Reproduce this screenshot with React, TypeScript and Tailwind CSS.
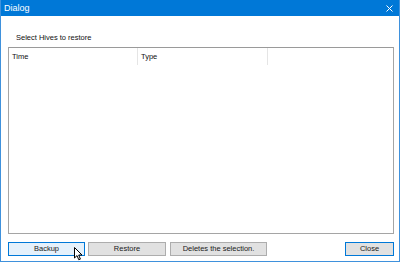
const font = { fontFamily: '"Liberation Sans", Arial, sans-serif' };

type ButtonProps = {
  label: string;
  className: string;
};

const DialogButton = ({ label, className }: ButtonProps) => (
  <div
    className={`flex h-[14px] items-center justify-center border text-[7.5px] leading-none text-[#1a1a1a] ${className}`}
  >
    {label}
  </div>
);

const Cursor = () => (
  <svg className="absolute left-[73px] top-[247px]" width="10" height="14" viewBox="0 0 10 14">
    <path
      d="M0.5 0.5 L0.5 11 L3 8.6 L4.8 12.8 L6.4 12.1 L4.7 8 L8 8 Z"
      fill="#fff"
      stroke="#000"
      strokeWidth="1"
      strokeLinejoin="round"
    />
  </svg>
);

export default function App() {
  return (
    <div
      className="relative flex h-[262px] w-[400px] flex-col overflow-hidden border-x border-b border-[#3f91dc] bg-white"
      style={font}
    >
      <div className="flex h-[16px] shrink-0 items-center justify-between bg-[#0078d7] pl-[3px] pr-[6px]">
        <span className="text-[9px] leading-none text-white">Dialog</span>
        <svg width="7" height="7" viewBox="0 0 7 7">
          <path d="M0.5 0.5 L6.5 6.5 M6.5 0.5 L0.5 6.5" stroke="#fff" strokeWidth="1" />
        </svg>
      </div>

      <div className="flex flex-1 flex-col pl-[7px]">
        <div className="mt-[16px] h-[12px] pl-[8px] text-[7.5px] leading-[12px] text-[#111]">
          Select Hives to restore
        </div>

        <div className="mt-[3px] h-[187px] w-[386px] border border-[#a5a5a5] border-t-[#9a9a9a] bg-white">
          <div className="flex h-[17px] text-[7.5px] text-[#111]">
            <div className="flex w-[129px] items-center border-r border-[#e5e5e5] pl-[3px]">Time</div>
            <div className="flex w-[130px] items-center border-r border-[#e5e5e5] pl-[3px]">Type</div>
          </div>
        </div>

        <div className="mt-[8px] flex w-[386px]">
          <DialogButton label="Backup" className="w-[77px] border-[#0078d7] bg-[#e5f1fb]" />
          <DialogButton label="Restore" className="ml-[3px] w-[78px] border-[#adadad] bg-[#e1e1e1]" />
          <DialogButton
            label="Deletes the selection."
            className="ml-[4px] w-[97px] border-[#adadad] bg-[#e1e1e1]"
          />
          <DialogButton label="Close" className="ml-auto w-[49px] border-[#0078d7] bg-[#e1e1e1]" />
        </div>
      </div>

      <Cursor />
    </div>
  );
}
